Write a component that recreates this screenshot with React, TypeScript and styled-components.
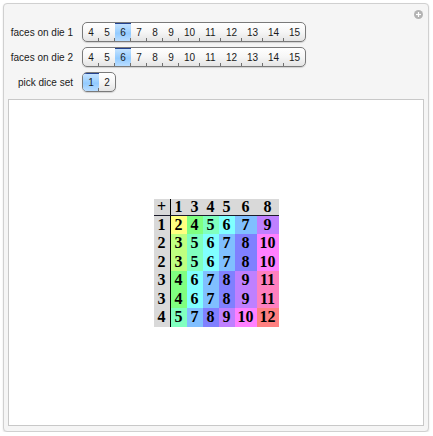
import React, { useState } from 'react'
import styled, { createGlobalStyle } from 'styled-components'

const GlobalStyle = createGlobalStyle`
  html, body {
    margin: 0;
    padding: 0;
    background: #ffffff;
  }
  body {
    font-family: 'Liberation Sans', Arial, sans-serif;
  }
`

const Panel = styled.div`
  position: relative;
  box-sizing: border-box;
  margin: 3px 0 0 3px;
  width: 426px;
  height: 429px;
  display: flex;
  flex-direction: column;
  padding: 18px 4px 5px 4px;
  background: #f5f5f5;
  border: 1px solid #d0d0d0;
  border-radius: 4px;
  box-shadow: 0 1px 2px rgba(0, 0, 0, 0.12);
`

const AddButton = styled.div`
  position: absolute;
  top: 6px;
  right: 5px;
  width: 9px;
  height: 9px;
  display: flex;
`

const Controls = styled.div`
  display: grid;
  grid-template-columns: 65px auto;
  column-gap: 9px;
  row-gap: 5px;
  grid-auto-rows: 20px;
  margin-bottom: 7px;
`

const Label = styled.div`
  align-self: center;
  text-align: right;
  font-size: 10px;
  color: #1a1a1a;
  white-space: nowrap;
`

const Bar = styled.div`
  justify-self: start;
  display: flex;
  height: 20px;
  box-sizing: border-box;
  border: 1px solid #7a7a7a;
  border-radius: 5px;
  overflow: hidden;
  background: linear-gradient(#ffffff, #f6f6f6 50%, #e4e4e4);
  box-shadow: 0 1px 1px rgba(0, 0, 0, 0.15);
`

const Choice = styled.button<{ $wide: boolean; $active: boolean }>`
  position: relative;
  width: ${({ $wide }) => ($wide ? 21 : 16)}px;
  height: 100%;
  padding: 0;
  margin: 0;
  border: none;
  border-top: 1px solid ${({ $active }) => ($active ? '#23428f' : 'transparent')};
  background: ${({ $active }) =>
    $active ? 'linear-gradient(#c4e3ff, #93cbff 55%, #b9ddff)' : 'transparent'};
  font-family: 'Liberation Sans', Arial, sans-serif;
  font-size: 10px;
  line-height: 16px;
  color: #1a1a1a;
  cursor: pointer;

  &:not(:last-child)::after {
    content: '';
    position: absolute;
    right: 0;
    bottom: 0;
    width: 1px;
    height: 3px;
    background: #6f6f6f;
  }
`

const Output = styled.div`
  flex: 1;
  display: flex;
  align-items: center;
  justify-content: center;
  background: #ffffff;
  border: 1px solid #c8c8c8;
`

const Table = styled.div<{ $cols: string }>`
  display: grid;
  grid-template-columns: ${({ $cols }) => $cols};
  grid-template-rows: 17px;
  grid-auto-rows: 18.5px;
  font-family: 'Liberation Serif', 'Times New Roman', serif;
  font-weight: bold;
  font-size: 16px;
  color: #000000;
`

const TCell = styled.div<{ $bg: string; $lineRight?: boolean; $lineBottom?: boolean }>`
  display: flex;
  align-items: center;
  justify-content: center;
  background: ${({ $bg }) => $bg};
  border-right: ${({ $lineRight }) => ($lineRight ? '1px solid #000' : 'none')};
  border-bottom: ${({ $lineBottom }) => ($lineBottom ? '1px solid #1c1c2c' : 'none')};
  line-height: 1;
`

const HEAD_BG = '#d9d9d9'

const sumColor = (v: number) => `hsl(${(v - 2) * 30 + 60}, 100%, 75%)`

const FACES = [4, 5, 6, 7, 8, 9, 10, 11, 12, 13, 14, 15]

const makeDie = (n: number, set: number, which: number) => {
  if (n === 6 && set === 1) return which === 1 ? [1, 2, 2, 3, 3, 4] : [1, 3, 4, 5, 6, 8]
  return Array.from({ length: n }, (_, i) => i + 1)
}

const PlusIcon = () => (
  <svg width="9" height="9" viewBox="0 0 9 9">
    <circle cx="4.5" cy="4.5" r="4.5" fill="#b3b3b3" />
    <rect x="2" y="3.9" width="5" height="1.2" fill="#ffffff" />
    <rect x="3.9" y="2" width="1.2" height="5" fill="#ffffff" />
  </svg>
)

const Setter: React.FC<{ options: number[]; value: number; onChange: (v: number) => void }> = ({
  options,
  value,
  onChange,
}) => (
  <Bar>
    {options.map((o) => (
      <Choice key={o} $wide={o >= 10} $active={o === value} onClick={() => onChange(o)}>
        {o}
      </Choice>
    ))}
  </Bar>
)

const App: React.FC = () => {
  const [faces1, setFaces1] = useState(6)
  const [faces2, setFaces2] = useState(6)
  const [diceSet, setDiceSet] = useState(1)

  const rows = makeDie(faces1, diceSet, 1)
  const cols = makeDie(faces2, diceSet, 2)
  const colTemplate = [
    '17px',
    ...cols.map((c) => (rows.some((r) => r + c >= 10) ? '22px' : '16px')),
  ].join(' ')

  return (
    <>
      <GlobalStyle />
      <Panel>
        <AddButton>
          <PlusIcon />
        </AddButton>
        <Controls>
          <Label>faces on die 1</Label>
          <Setter options={FACES} value={faces1} onChange={setFaces1} />
          <Label>faces on die 2</Label>
          <Setter options={FACES} value={faces2} onChange={setFaces2} />
          <Label>pick dice set</Label>
          <Setter options={[1, 2]} value={diceSet} onChange={setDiceSet} />
        </Controls>
        <Output>
          <Table $cols={colTemplate}>
            <TCell $bg={HEAD_BG} $lineRight $lineBottom>
              +
            </TCell>
            {cols.map((c, i) => (
              <TCell key={`h${i}`} $bg={HEAD_BG} $lineBottom>
                {c}
              </TCell>
            ))}
            {rows.map((r, ri) => (
              <React.Fragment key={`r${ri}`}>
                <TCell $bg={HEAD_BG} $lineRight>
                  {r}
                </TCell>
                {cols.map((c, ci) => (
                  <TCell key={`c${ri}-${ci}`} $bg={sumColor(r + c)}>
                    {r + c}
                  </TCell>
                ))}
              </React.Fragment>
            ))}
          </Table>
        </Output>
      </Panel>
    </>
  )
}

export default App
